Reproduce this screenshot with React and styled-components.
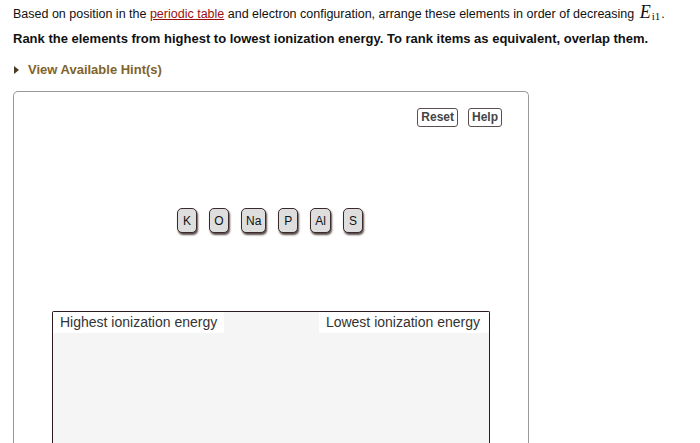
import React from 'react'
import styled, { createGlobalStyle } from 'styled-components'

const GlobalStyle = createGlobalStyle`
	html, body {
		margin: 0;
		padding: 0;
		background: #fff;
		font-family: "Liberation Sans", Arial, sans-serif;
		color: #111;
	}
`

const elements = ['K', 'O', 'Na', 'P', 'Al', 'S']

const App = () => {
	return (
		<Page>
			<GlobalStyle />
			<Prompt>
				Based on position in the <PLink href='#'>periodic table</PLink> and electron configuration, arrange these elements in order of decreasing{' '}
				<MathE>E<sub>i1</sub></MathE>.
			</Prompt>
			<Instruction>
				Rank the elements from highest to lowest ionization energy. To rank items as equivalent, overlap them.
			</Instruction>
			<Hint>
				<Caret />
				View Available Hint(s)
			</Hint>
			<Panel>
				<Toolbar>
					<ToolButton>Reset</ToolButton>
					<ToolButton>Help</ToolButton>
				</Toolbar>
				<TileRow>
					{elements.map((el) => (
						<Tile key={`tile_${el}`}>{el}</Tile>
					))}
				</TileRow>
				<DropZone>
					<ZoneLabels>
						<ZoneLabel>Highest ionization energy</ZoneLabel>
						<ZoneLabel>Lowest ionization energy</ZoneLabel>
					</ZoneLabels>
				</DropZone>
			</Panel>
		</Page>
	)
}

const Page = styled.div`
	padding: 5px 0 0 13px;
	height: 443px;
	overflow: hidden;
	box-sizing: border-box;
`

const Prompt = styled.p`
	margin: 0;
	height: 18px;
	font-size: 12.5px;
	line-height: 18px;
	white-space: nowrap;
`

const PLink = styled.a`
	color: #9a0f0f;
	text-decoration: underline;
`

const MathE = styled.span`
	font-family: "Liberation Serif", "Times New Roman", serif;
	font-style: italic;
	font-size: 18px;
	line-height: 0;
	margin-left: 2px;

	sub {
		font-style: normal;
		font-size: 11px;
		line-height: 0;
		vertical-align: -2px;
		margin-left: 1px;
		margin-right: 1px;
	}
`

const Instruction = styled.p`
	margin: 8px 0 0;
	font-size: 13px;
	line-height: 16px;
	font-weight: bold;
	white-space: nowrap;
`

const Hint = styled.div`
	margin-top: 15px;
	display: flex;
	align-items: center;
	gap: 9px;
	font-size: 13px;
	line-height: 16px;
	font-weight: bold;
	color: #80632a;
`

const Caret = styled.span`
	width: 0;
	height: 0;
	border-top: 4px solid transparent;
	border-bottom: 4px solid transparent;
	border-left: 5px solid #4a3a26;
	margin-left: 1px;
`

const Panel = styled.div`
	margin-top: 13px;
	width: 516px;
	height: 400px;
	box-sizing: border-box;
	border: 1px solid #999;
	border-bottom: none;
	border-radius: 5px 5px 0 0;
	padding: 16px 26px 0 0;
	display: flex;
	flex-direction: column;
	align-items: center;
`

const Toolbar = styled.div`
	align-self: flex-end;
	display: flex;
	gap: 10px;
`

const ToolButton = styled.button`
	font-family: "Liberation Sans", Arial, sans-serif;
	font-size: 12px;
	font-weight: bold;
	color: #444;
	background: #fff;
	border: 1px solid #5a5050;
	border-radius: 3px;
	padding: 1px 3px;
	height: 19px;
	line-height: 15px;
`

const TileRow = styled.div`
	margin-top: 81px;
	margin-left: 24px;
	display: flex;
	gap: 12px;
`

const Tile = styled.div`
	min-width: 20px;
	height: 25px;
	box-sizing: border-box;
	padding: 0 4px;
	display: flex;
	align-items: center;
	justify-content: center;
	font-size: 12px;
	color: #111;
	background: #dedede;
	border: 1px solid #3a2a2a;
	border-radius: 5px;
	box-shadow: 1px 2px 2px #5a4a4a;
`

const DropZone = styled.div`
	margin-top: 78px;
	margin-left: 26px;
	width: 438px;
	flex: 1;
	box-sizing: border-box;
	background: #f5f5f5;
	border: 1px solid #2c1c1e;
	border-bottom: none;
	border-radius: 2px 2px 0 0;
`

const ZoneLabels = styled.div`
	display: flex;
	justify-content: space-between;
`

const ZoneLabel = styled.span`
	background: #fff;
	font-size: 14px;
	line-height: 21px;
	color: #333;
	padding: 0 7px;

	&:last-child {
		padding-right: 9px;
	}
`

export default App
